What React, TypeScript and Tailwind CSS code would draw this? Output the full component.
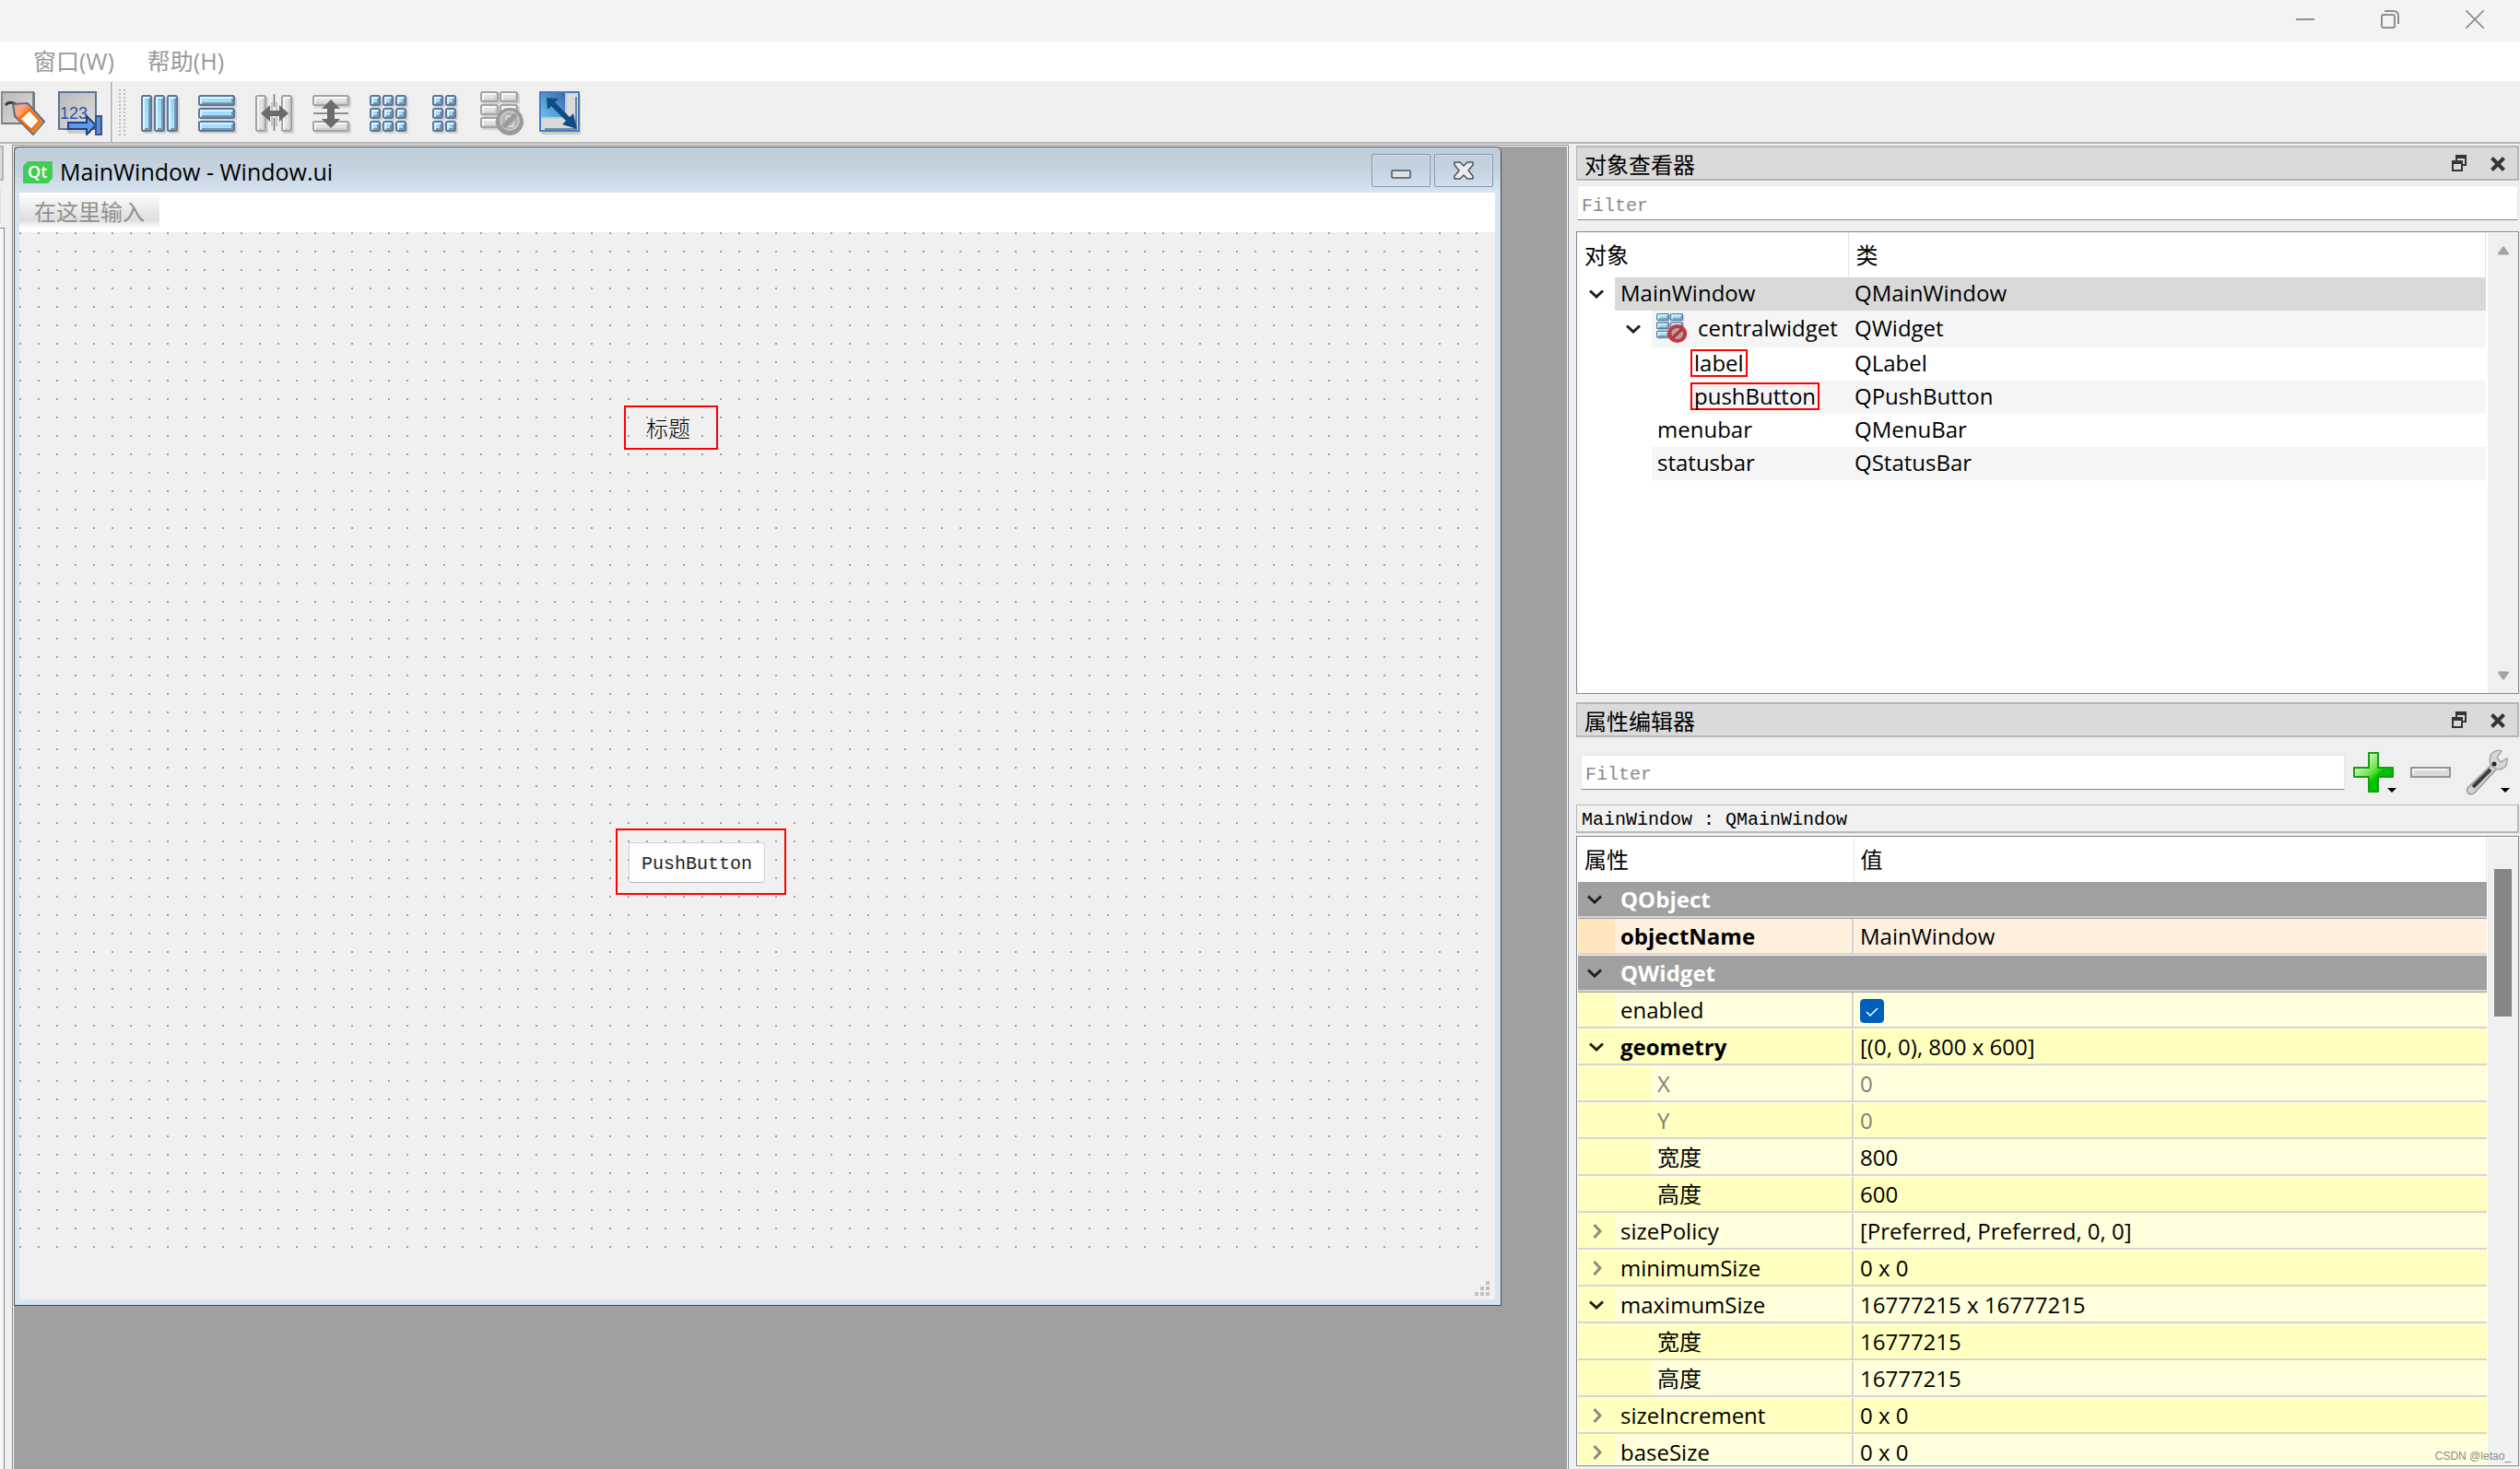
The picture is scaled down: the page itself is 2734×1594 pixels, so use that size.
import React, { useState } from 'react';

const UI_FONT = 'font-["Open_Sans","Noto_Sans_CJK_SC",sans-serif]';
const MONO_FONT = 'font-["Liberation_Mono","Noto_Sans_CJK_SC",monospace]';

interface ObjectRow {
  name: string;
  type: string;
  depth: number;
  open?: boolean;
  icon?: boolean;
  marked?: boolean;
}

interface PropertyRow {
  name: string;
  value?: string;
  kind: 'group' | 'object' | 'widget';
  sub?: boolean;
  bold?: boolean;
  muted?: boolean;
  check?: boolean;
  arrow?: 'open' | 'closed';
}

const objects: ObjectRow[] = [
  { name: 'MainWindow', type: 'QMainWindow', depth: 0, open: true },
  { name: 'centralwidget', type: 'QWidget', depth: 1, open: true, icon: true },
  { name: 'label', type: 'QLabel', depth: 2, marked: true },
  { name: 'pushButton', type: 'QPushButton', depth: 2, marked: true },
  { name: 'menubar', type: 'QMenuBar', depth: 1 },
  { name: 'statusbar', type: 'QStatusBar', depth: 1 },
];

const properties: PropertyRow[] = [
  { name: 'QObject', kind: 'group', arrow: 'open' },
  { name: 'objectName', value: 'MainWindow', kind: 'object', bold: true },
  { name: 'QWidget', kind: 'group', arrow: 'open' },
  { name: 'enabled', kind: 'widget', check: true },
  { name: 'geometry', value: '[(0, 0), 800 x 600]', kind: 'widget', bold: true, arrow: 'open' },
  { name: 'X', value: '0', kind: 'widget', sub: true, muted: true },
  { name: 'Y', value: '0', kind: 'widget', sub: true, muted: true },
  { name: '宽度', value: '800', kind: 'widget', sub: true },
  { name: '高度', value: '600', kind: 'widget', sub: true },
  { name: 'sizePolicy', value: '[Preferred, Preferred, 0, 0]', kind: 'widget', arrow: 'closed' },
  { name: 'minimumSize', value: '0 x 0', kind: 'widget', arrow: 'closed' },
  { name: 'maximumSize', value: '16777215 x 16777215', kind: 'widget', arrow: 'open' },
  { name: '宽度', value: '16777215', kind: 'widget', sub: true },
  { name: '高度', value: '16777215', kind: 'widget', sub: true },
  { name: 'sizeIncrement', value: '0 x 0', kind: 'widget', arrow: 'closed' },
  { name: 'baseSize', value: '0 x 0', kind: 'widget', arrow: 'closed' },
];

const Chevron = ({ open }: { open: boolean }) =>
  open ? (
    <svg width="16" height="10" viewBox="0 0 16 10" fill="none" stroke="#1f1f1f" strokeWidth="3">
      <path d="M1 1.5 8 8l7-6.5" />
    </svg>
  ) : (
    <svg width="10" height="16" viewBox="0 0 10 16" fill="none" stroke="#8a8a8a" strokeWidth="3">
      <path d="M1.5 1 8 8l-6.500 7" />
    </svg>
  );

// Glossy block used by all of the layout icons
const Block = ({ x, y, w, h, gray }: { x: number; y: number; w: number; h: number; gray?: boolean }) => (
  <g>
    <rect x={x + 2} y={y + 2} width={w} height={h} rx="2" fill="#000" opacity="0.12" />
    <rect
      x={x + 1}
      y={y + 1}
      width={w - 2}
      height={h - 2}
      rx="1.500"
      fill={gray ? '#e2e2e2' : 'url(#blueBlock)'}
      stroke={gray ? '#a3a3a3' : '#5d789c'}
      strokeWidth="2"
    />
    <path
      d={`M${x + 3} ${y + h - 3}V${y + 3}H${x + w - 3}`}
      fill="none"
      stroke={gray ? '#f8f8f8' : '#dcf6ff'}
      strokeWidth="2"
    />
    <path
      d={`M${x + 4} ${y + h - 3}H${x + w - 3}V${y + 4}`}
      fill="none"
      stroke={gray ? '#cfcfcf' : '#7796ad'}
      strokeWidth="2"
    />
  </g>
);

const Icon = ({ children }: { children: React.ReactNode }) => (
  <svg width="48" height="48" viewBox="0 0 48 48" className="block">
    <defs>
      <linearGradient id="blueBlock" x1="0" y1="0" x2="0" y2="1">
        <stop offset="0" stopColor="#8ed4fb" />
        <stop offset="1" stopColor="#b4e6fc" />
      </linearGradient>
      <linearGradient id="paper" x1="0" y1="0" x2="1" y2="1">
        <stop offset="0" stopColor="#b9b9b9" />
        <stop offset="1" stopColor="#dedede" />
      </linearGradient>
      <linearGradient id="resizeBlue" x1="1" y1="0" x2="0" y2="1">
        <stop offset="0" stopColor="#3a68b4" />
        <stop offset="1" stopColor="#6cc3e6" />
      </linearGradient>
    </defs>
    {children}
  </svg>
);

const BuddyIcon = () => (
  <Icon>
    <rect x="1" y="1" width="34" height="34" fill="url(#paper)" stroke="#8a8a8a" strokeWidth="2" />
    <path d="M36 1v34H1" fill="none" stroke="#7a7a7a" strokeWidth="2" />
    <path d="M5 15q4-5 11-1" fill="none" stroke="#3c3c3c" strokeWidth="3" />
    <path d="M13 14 29 13 47 33 35 47 15 27Z" fill="#f9905a" stroke="#5d6c8c" strokeWidth="2" />
    <path d="M15 15 28 14 20 27 16 25Z" fill="#fda27a" />
    <path d="M31 20 42 32 33 42 20 30Z" fill="#fff" stroke="#ff6a00" strokeWidth="2.500" />
    <path d="M44 33 35 44" stroke="#d58a2e" strokeWidth="4" />
  </Icon>
);

const TabOrderIcon = () => (
  <Icon>
    <path d="M8 42h28v4H12z" fill="#000" opacity="0.15" />
    <rect x="1" y="1" width="40" height="40" fill="url(#paper)" stroke="#5b7499" strokeWidth="2" />
    <text x="2" y="30" fontSize="18" fontFamily="Liberation Sans, sans-serif" fill="#2558b0">123</text>
    <path d="M11 34h20v-7l10 10-10 10v-6H11z" fill="#5a9af0" stroke="#26406f" strokeWidth="2" />
    <rect x="41" y="27" width="6" height="20" fill="#4f8fe8" stroke="#3a5580" strokeWidth="2" />
  </Icon>
);

const HorizontalIcon = () => (
  <Icon>
    {[4, 18, 32].map((x) => <Block key={x} x={x} y={4} w={12} h={40} />)}
  </Icon>
);

const VerticalIcon = () => (
  <Icon>
    {[4, 18, 32].map((y) => <Block key={y} x={4} y={y} w={40} h={12} />)}
  </Icon>
);

const HSplitIcon = () => (
  <Icon>
    <Block x={4} y={4} w={12} h={40} gray />
    <Block x={32} y={4} w={12} h={40} gray />
    <path d="M22 12v26M27 12v26" stroke="#b5b5b5" strokeWidth="1.500" />
    <path d="M24.500 3v40" stroke="#777" strokeWidth="1.500" strokeDasharray="14 12" />
    <path d="M10 24 20 15v6h10v-6l10 9-10 9v-6H20v6z" fill="#6b6b6b" />
  </Icon>
);

const VSplitIcon = () => (
  <Icon>
    <Block x={4} y={4} w={40} h={12} gray />
    <Block x={4} y={32} w={40} h={12} gray />
    <path d="M5 24h38" stroke="#8f8f8f" strokeWidth="2" />
    <path d="M24 9 34 19h-6v11h6L24 40 14 30h6V19h-6z" fill="#6b6b6b" />
  </Icon>
);

const GridIcon = () => (
  <Icon>
    {[4, 18, 32].map((y) => [4, 18, 32].map((x) => <Block key={`${x}-${y}`} x={x} y={y} w={12} h={12} />))}
  </Icon>
);

const FormIcon = () => (
  <Icon>
    {[4, 18, 32].map((y) => [10, 24].map((x) => <Block key={`${x}-${y}`} x={x} y={y} w={12} h={12} />))}
  </Icon>
);

const BreakIcon = () => (
  <Icon>
    <Block x={0} y={0} w={20} h={12} gray />
    <Block x={21} y={0} w={20} h={12} gray />
    <Block x={0} y={14} w={20} h={12} gray />
    <Block x={21} y={14} w={20} h={12} gray />
    <Block x={0} y={28} w={20} h={12} gray />
    <circle cx="32" cy="33" r="15" fill="#9a9a9a" />
    <circle cx="32" cy="32" r="10" fill="#b4b4b4" stroke="#cfcfcf" strokeWidth="1.500" />
    <path d="M25 39 39 25" stroke="#9a9a9a" strokeWidth="5" />
    <path d="M28 31v-4h5M36 34v4h-5" fill="none" stroke="#d8d8d8" strokeWidth="2" />
  </Icon>
);

const AdjustIcon = () => (
  <Icon>
    <rect x="4" y="3" width="43" height="44" rx="2" fill="#000" opacity="0.15" />
    <rect x="3" y="1" width="42" height="42" fill="#dadada" stroke="#3d7fc0" strokeWidth="2" />
    <rect x="4" y="2" width="26" height="26" fill="url(#resizeBlue)" />
    <path d="M31 2v27H4" fill="none" stroke="#c2cdd6" strokeWidth="2" />
    <path d="M8 41h34V6" fill="none" stroke="#5a6f7c" strokeWidth="1.500" />
    <path d="M10 7 23 8 19 12 35 28 39 24 43 41 27 36 31 32 15 16 11 20Z" fill="#0f4c86" />
  </Icon>
);

const BrokenLayoutIcon = () => (
  <svg width="34" height="32" viewBox="0 0 48 48" preserveAspectRatio="none">
    <Block x={0} y={0} w={20} h={12} />
    <Block x={21} y={0} w={20} h={12} />
    <Block x={0} y={14} w={20} h={12} />
    <Block x={21} y={14} w={20} h={12} />
    <Block x={0} y={28} w={20} h={12} />
    <circle cx="32" cy="33" r="15" fill="#c03a3a" />
    <circle cx="32" cy="33" r="9" fill="#a9a9b3" />
    <path d="M25 40 39 26" stroke="#b53434" strokeWidth="5" />
  </svg>
);

const tools = [
  { label: '水平布局', icon: <HorizontalIcon /> },
  { label: '垂直布局', icon: <VerticalIcon /> },
  { label: '使用分裂器水平布局', icon: <HSplitIcon /> },
  { label: '使用分裂器垂直布局', icon: <VSplitIcon /> },
  { label: '栅格布局', icon: <GridIcon /> },
  { label: '在窗体布局中布局', icon: <FormIcon /> },
  { label: '打破布局', icon: <BreakIcon /> },
  { label: '调整大小', icon: <AdjustIcon /> },
];

const TitleBar = () => (
  <header className="flex h-[45px] shrink-0 justify-end bg-[#f3f3f3] pr-4">
    <div className="flex h-[42px] gap-[26px] text-[#8f8f8f]">
      <button aria-label="Minimize" className="flex w-[66px] items-center justify-center">
        <svg width="20" height="20" viewBox="0 0 20 20" stroke="currentColor" strokeWidth="2"><path d="M0 10h20" /></svg>
      </button>
      <button aria-label="Restore" className="flex w-[66px] items-center justify-center">
        <svg width="20" height="20" viewBox="0 0 20 20" fill="none" stroke="currentColor" strokeWidth="2">
          <rect x="1" y="5" width="14" height="14" rx="2" />
          <path d="M4 1h10q5 0 5 5v9" />
        </svg>
      </button>
      <button aria-label="Close" className="flex w-[66px] items-center justify-center">
        <svg width="20" height="20" viewBox="0 0 20 20" stroke="currentColor" strokeWidth="1.800"><path d="M0 0 20 20M20 0 0 20" /></svg>
      </button>
    </div>
  </header>
);

const MenuBar = () => (
  <nav className="flex h-[43px] shrink-0 items-center gap-9 bg-white pl-9 text-[25px] text-[#9a9a9a]">
    <button>窗口(W)</button>
    <button>帮助(H)</button>
  </nav>
);

const ToolBars = () => (
  <div className="flex h-[68px] shrink-0 border-t border-b-2 border-t-[#efefef] border-b-[#b8b8b8] bg-[#efefef]">
    <div className="flex items-center border-r-2 border-[#b8b8b8] pt-0.5">
      <button aria-label="编辑伙伴" className="flex w-[56px] justify-start pl-px"><BuddyIcon /></button>
      <button aria-label="编辑Tab顺序" className="flex w-[64px] justify-start pl-[7px]"><TabOrderIcon /></button>
    </div>
    <div className="flex flex-1 items-center border-l border-white pt-0.5">
      <svg width="7" height="52" className="mr-[6px] ml-[6px]">
        <defs>
          <pattern id="grip" width="5" height="4" patternUnits="userSpaceOnUse">
            <rect width="2" height="2" fill="#bdbdbd" />
          </pattern>
        </defs>
        <rect width="7" height="52" fill="url(#grip)" />
      </svg>
      {tools.map((tool) => (
        <button key={tool.label} aria-label={tool.label} className="flex w-[62px] justify-center">
          {tool.icon}
        </button>
      ))}
    </div>
  </div>
);

const FormWindow = () => (
  <section className="flex h-[1258px] w-[1614px] flex-col rounded-t-md border border-[#4a4a4a] bg-[#d7e4f2] pr-[6px] pb-1.5 pl-[5px]">
    <div className="-mr-[6px] -ml-[5px] flex h-[49px] shrink-0 items-center rounded-t-md bg-linear-to-b from-[#bfcddb] via-[#c5d2e0] to-[#d7e4f2] pr-[8px] pl-[9px]">
      <svg width="32" height="24" viewBox="0 0 32 24" className="mt-1">
        <path d="M5 0h27v18l-5 6H0V5z" fill="#41cd52" />
        <text x="5" y="18" fontSize="18" fontFamily="Open Sans, sans-serif" fontWeight="600" fill="#fff">Qt</text>
      </svg>
      <h1 className="flex-1 pt-1 pl-2 text-[25px] text-black">MainWindow - Window.ui</h1>
      <div className="flex gap-1">
        <button aria-label="Minimize form" className="flex h-9 w-16 items-center justify-center rounded-xs border border-[#8295b0] shadow-[inset_0_0_0_1px_#d3dfec]">
          <svg width="22" height="10" className="mt-2"><rect x="1" y="1" width="20" height="8" rx="1" fill="#e2e2e2" stroke="#4b5263" strokeWidth="1.500" /></svg>
        </button>
        <button aria-label="Close form" className="flex h-9 w-16 items-center justify-center rounded-xs border border-[#8295b0] shadow-[inset_0_0_0_1px_#d3dfec]">
          <svg width="24" height="20" viewBox="0 0 24 20">
            <path d="M2 1h6l4 4 4-4h6v3l-5 6 5 6v3h-6l-4-4-4 4H2v-3l5-6-5-6z" fill="#ececec" stroke="#4b5263" strokeWidth="1.500" strokeLinejoin="round" />
          </svg>
        </button>
      </div>
    </div>
    <div className="flex h-[43px] shrink-0 items-start bg-white">
      <button className="h-[39px] bg-linear-to-b from-white via-[#dedede] via-75% to-white px-4 pt-0.5 text-2xl text-[#909090]">在这里输入</button>
    </div>
    <div className="relative flex-1 bg-[#f0f0f0]">
      <svg width="1600" height="1102" className="block">
        <defs>
          <pattern id="dots" width="20" height="20" patternUnits="userSpaceOnUse">
            <rect width="2" height="2" fill="#a0a0a0" />
          </pattern>
        </defs>
        <rect width="1600" height="1102" fill="url(#dots)" />
      </svg>
      <div className="absolute top-[188px] left-[656px] flex h-[48px] w-[102px] items-center border-2 border-[#ff0000] pt-0.5 pl-[22px] text-2xl font-light text-black">
        标题
      </div>
      <div className="absolute top-[647px] left-[647px] h-[72px] w-[185px] border-2 border-[#ff0000] px-3 py-[13px]">
        <button className={`h-[44px] w-[148px] rounded border border-[#d0d0d0] border-b-[#b9b9b9] bg-[#fdfdfd] pt-1 text-[20px] text-[#222] ${MONO_FONT}`}>
          PushButton
        </button>
      </div>
      <svg width="16" height="16" className="absolute right-[6px] bottom-[4px]" fill="#bfbfbf">
        <path d="M12 0h4v4h-4zM6 6h4v4H6zM12 6h4v4h-4zM0 12h4v4H0zM6 12h4v4H6zM12 12h4v4h-4z" />
      </svg>
    </div>
  </section>
);

const DockTitle = ({ title }: { title: string }) => (
  <div className="flex h-[38px] shrink-0 items-center border-2 border-l border-[#b6b6b6] bg-[#dadada] pr-[13px] pl-2">
    <h2 className="flex-1 pt-1 text-2xl leading-[30px] text-black">{title}</h2>
    <button aria-label={`浮动 ${title}`} className="mr-[26px]">
      <svg width="16" height="18" viewBox="0 0 16 18" fill="none" stroke="#333537" strokeWidth="2">
        <path d="M5 6V2h10v9h-3M1 8h10v9H1z" />
        <path d="M4 2h12M0 8h12" strokeWidth="4" />
      </svg>
    </button>
    <button aria-label={`关闭 ${title}`} className="pt-0.5">
      <svg width="16" height="16" viewBox="0 0 16 16" stroke="#333537" strokeWidth="4"><path d="M1.500 1.500l13 13M14.500 1.500l-13 13" /></svg>
    </button>
  </div>
);

const FilterInput = ({ label }: { label: string }) => (
  <input
    type="text"
    aria-label={label}
    placeholder="Filter"
    className={`block h-[38px] w-full min-w-0 border border-[#e8e8e8] border-b-[#868686] bg-white px-1 pt-1.5 text-[20px] text-black outline-none placeholder:text-[#8a8a8a] ${MONO_FONT}`}
  />
);

const indents = ['w-[41px]', 'w-[81px]', 'w-[121px]'];

const ObjectInspector = () => (
  <section className="flex flex-col">
    <DockTitle title="对象查看器" />
    <div className="mt-[5px] pr-px pl-px">
      <FilterInput label="过滤对象" />
    </div>
    <div className="mt-3 flex h-[502px] border border-[#828790] bg-white">
      <div className="flex-1">
        <table className="w-full table-fixed border-collapse text-2xl text-black">
          <colgroup>
            <col className="w-[294px]" />
            <col />
          </colgroup>
          <thead>
            <tr className="h-[49px] text-left">
              <th className="border-r border-[#e5e5e5] p-0 pl-2 font-normal">对象</th>
              <th className="border-r border-[#e5e5e5] p-0 pl-2 font-normal">类</th>
            </tr>
          </thead>
          <tbody>
            {objects.map((row, i) => {
              const bg = i === 0 ? 'bg-[#d9d9d9]' : i % 2 ? 'bg-[#f5f5f5]' : 'bg-white';
              return (
                <tr key={row.name} className={row.icon ? 'h-10' : 'h-9'}>
                  <td className="p-0">
                    <div className={`flex ${row.icon ? 'h-10' : 'h-9'}`}>
                      <span className={`flex shrink-0 items-center justify-end pr-3 ${indents[row.depth]}`}>
                        {row.open && <Chevron open />}
                      </span>
                      <span className={`flex flex-1 items-center pb-0.5 ${bg}`}>
                        {row.icon && <span className="mr-[7px] ml-[5px]"><BrokenLayoutIcon /></span>}
                        {row.marked ? (
                          <span className="ml-0.5 border-2 border-[#ff0000] px-0.5 leading-[26px]">{row.name}</span>
                        ) : (
                          <span className={row.icon ? 'pl-1' : 'pl-1.5'}>{row.name}</span>
                        )}
                      </span>
                    </div>
                  </td>
                  <td className={`p-0 pb-0.5 pl-[7px] leading-[34px] ${bg}`}>{row.type}</td>
                </tr>
              );
            })}
          </tbody>
        </table>
      </div>
      <div className="mt-px ml-0.5 flex w-[33px] flex-col items-center justify-between bg-[#f0f0f0] py-[14px]">
        <svg width="12" height="10" viewBox="0 0 12 10" fill="#a3a3a3"><path d="M5 1q1-1.500 2 0l5 7q0 1.500-1 1.500H1Q0 9.500 0 8z" /></svg>
        <svg width="12" height="10" viewBox="0 0 12 10" fill="#a3a3a3"><path d="M5 9q1 1.500 2 0l5-7q0-1.500-1-1.500H1Q0 .5 0 2z" /></svg>
      </div>
    </div>
  </section>
);

const EditorActions = () => (
  <div className="flex items-center pt-0.5">
    <button aria-label="添加动态属性" className="ml-[9px]">
      <svg width="48" height="48" viewBox="0 0 48 48">
        <defs>
          <linearGradient id="plus" x1="0" y1="0" x2="1" y2="1">
            <stop offset="0.2" stopColor="#d8f7c4" />
            <stop offset="0.500" stopColor="#5ce038" />
            <stop offset="0.600" stopColor="#00c400" />
            <stop offset="1" stopColor="#00b800" />
          </linearGradient>
        </defs>
        <path d="M17 3h10v16h16v10H27v16H17V29H1V19h16z" fill="url(#plus)" stroke="#12a012" strokeWidth="2" strokeLinejoin="round" />
        <path d="M37 41h10l-5 5z" fill="#000" />
      </svg>
    </button>
    <button aria-label="删除动态属性" className="ml-[14px]">
      <svg width="44" height="12" viewBox="0 0 44 12">
        <rect x="1" y="1" width="42" height="10" fill="#d9d9d9" stroke="#949494" strokeWidth="2" />
        <path d="M3 8V3h37" fill="none" stroke="#f5f5f5" strokeWidth="2" />
      </svg>
    </button>
    <button aria-label="配置属性编辑器" className="ml-[15px]">
      <svg width="50" height="50" viewBox="0 0 50 50">
        <path d="M30 16 4 41q-3 4 0 7 4 2 7-1l24-26z" fill="#d2d2d2" stroke="#9b9b9b" strokeWidth="1.500" />
        <path d="M28 22 9 41" stroke="#3c3c3c" strokeWidth="4" />
        <path d="M28 17q-2-9 2-13 5-4 10-2l-5 7 4 5 7-4q1 8-5 11-5 2-9-1z" fill="#d6d6d6" stroke="#a8a8a8" strokeWidth="1.500" />
        <circle cx="32" cy="16" r="2.500" fill="#222" />
        <path d="M39 42h10l-5 5z" fill="#000" />
      </svg>
    </button>
  </div>
);

const propertyTone = (row: PropertyRow, index: number) => {
  if (row.kind === 'group') return { gutter: 'bg-[#a0a0a0]', cell: 'bg-[#a0a0a0]' };
  if (row.kind === 'object') return { gutter: 'bg-[#ffe4bd]', cell: 'bg-[#fff0de]' };
  return { gutter: 'bg-[#ffffbf]', cell: index % 2 ? 'bg-[#ffffdc]' : 'bg-[#ffffbf]' };
};

const PropertyEditor = () => {
  const [enabled, setEnabled] = useState(true);

  return (
    <section className="flex min-h-0 flex-1 flex-col pt-[9px]">
      <DockTitle title="属性编辑器" />
      <div className="flex h-[73px] shrink-0 items-center pr-[9px] pl-[5px]">
        <div className="min-w-0 flex-1 pt-0.5"><FilterInput label="过滤属性" /></div>
        <EditorActions />
      </div>
      <p className={`h-[31px] shrink-0 border border-r-2 border-b-2 border-[#b6b6b6] bg-[#f1f1f1] pt-1 pl-[5px] text-[20px] leading-6 text-black ${MONO_FONT}`}>
        MainWindow : QMainWindow
      </p>
      <div className="mt-[3px] mb-[3px] flex min-h-0 flex-1 overflow-hidden border border-[#828790] bg-white">
        <div className="flex-1 overflow-hidden pl-px">
          <table className="w-full table-fixed border-collapse text-2xl text-black">
            <colgroup>
              <col className="w-[299px]" />
              <col />
            </colgroup>
            <thead>
              <tr className="h-[49px] text-left">
                <th className="border-r border-[#e5e5e5] p-0 pl-[7px] font-normal">属性</th>
                <th className="border-r border-[#e5e5e5] p-0 pl-[7px] font-normal">值</th>
              </tr>
            </thead>
            <tbody>
              {properties.map((row, i) => {
                const tone = propertyTone(row, i);
                const group = row.kind === 'group';
                // the last visible row runs into the bottom of the view
                const last = i === properties.length - 1;
                const line = last ? 'h-8 pt-1.5 leading-[26px]' : 'h-[39px] border-b-2 leading-[37px]';
                return (
                  <tr key={`${row.name}-${i}`} className={last ? 'h-8' : 'h-10'}>
                    <td className={`p-0 ${last ? '' : 'pb-px'} ${tone.cell}`} colSpan={group ? 2 : 1}>
                      <div className={`flex border-[#d5d5d9] ${last ? 'h-8 leading-8' : 'h-[39px] border-b-2 leading-[37px]'} ${group ? '' : 'border-r-2'}`}>
                        <span className={`flex shrink-0 items-center ${last ? 'pt-1.5' : ''} ${row.sub ? 'w-20' : 'w-10'} ${tone.gutter} ${row.arrow === 'closed' ? 'pl-4' : group ? 'pl-[10px]' : 'pl-3'}`}>
                          {row.arrow && <Chevron open={row.arrow === 'open'} />}
                        </span>
                        <span
                          id={`prop-${i}`}
                          className={`pl-1.5 ${last ? 'pt-1.5 leading-[26px]' : ''} ${group ? 'font-bold text-white' : ''} ${row.bold ? 'font-bold' : ''} ${row.muted ? 'text-[#808080]' : ''}`}
                        >
                          {row.name}
                        </span>
                      </div>
                    </td>
                    {!group && (
                      <td className={`p-0 ${last ? '' : 'pb-px'} ${tone.cell}`}>
                        <div className={`flex items-center border-[#d5d5d9] pl-[7px] ${line} ${row.muted ? 'text-[#808080]' : ''}`}>
                          {row.check ? (
                            <span className="relative mt-[3px] flex">
                              <input
                                type="checkbox"
                                aria-labelledby={`prop-${i}`}
                                checked={enabled}
                                onChange={(e) => setEnabled(e.target.checked)}
                                className="size-[26px] appearance-none rounded border border-[#005fb8] bg-white checked:bg-[#005fb8]"
                              />
                              {enabled && (
                                <svg viewBox="0 0 26 26" className="pointer-events-none absolute inset-0" fill="none" stroke="#fff" strokeWidth="1.500">
                                  <path d="M7 14l4 4 8-8" />
                                </svg>
                              )}
                            </span>
                          ) : (
                            row.value
                          )}
                        </div>
                      </td>
                    )}
                  </tr>
                );
              })}
            </tbody>
          </table>
        </div>
        <div className="mt-px mb-px ml-px w-[33px] bg-[#f0f0f0] px-[7px] pt-[34px]">
          <div className="h-40 bg-[#858585]" />
        </div>
      </div>
    </section>
  );
};

const App = () => (
  <div className={`relative flex h-screen flex-col overflow-hidden bg-[#efefef] ${UI_FONT}`}>
    <TitleBar />
    <MenuBar />
    <ToolBars />
    <main className="flex min-h-0 flex-1 pt-px">
      {/* right edge of the widget box dock */}
      <aside className="flex w-[13px] shrink-0 flex-col items-start pt-px">
        <div className="h-[38px] w-1 border-y-2 border-r-2 border-[#b6b6b6] bg-[#dadada]" />
        <div className="mt-[10px] h-[36px] w-px bg-[#dedede]" />
        <div className="mt-[5px] w-[5px] flex-1 border-t border-r border-[#828790] bg-[#f7f7f7]" />
      </aside>
      <div className="min-w-0 flex-1 overflow-hidden border-t border-r border-l border-[#828790]">
        <div className="h-full overflow-hidden border-t border-r border-l border-white bg-[#a0a0a0]">
          <FormWindow />
        </div>
      </div>
      <div className="ml-2 flex w-[1024px] shrink-0 flex-col pt-px pr-px">
        <ObjectInspector />
        <PropertyEditor />
      </div>
    </main>
    <span className='absolute right-[10px] bottom-[6px] font-["Liberation_Sans",sans-serif] text-xs text-[#8c8c8c]'>CSDN @letao_</span>
  </div>
);

export default App;
